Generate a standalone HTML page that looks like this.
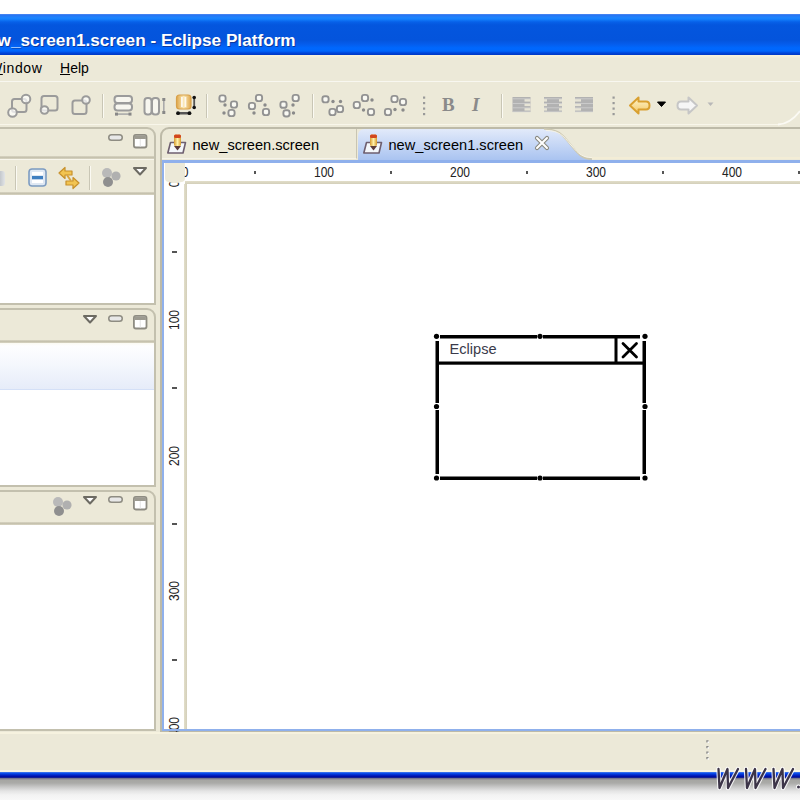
<!DOCTYPE html>
<html><head><meta charset="utf-8">
<style>
*{margin:0;padding:0;box-sizing:border-box}
html,body{width:800px;height:800px;overflow:hidden;background:#fff;font-family:"Liberation Sans",sans-serif}
.a{position:absolute}
#title{left:0;top:14px;width:800px;height:41px;background:linear-gradient(#5a90f0 0px,#2a74f2 1px,#1a86ff 4px,#127cfa 5.5px,#0760e8 8px,#0456de 11px,#0454dc 26px,#055ceb 30px,#0068fe 34px,#0066fc 37px,#0046da 39px,#0038c4 41px)}
#title span{position:absolute;top:15.5px;color:#fff;font-weight:bold;font-size:17.2px;line-height:20px;white-space:nowrap;text-shadow:1px 1px 0 #0a3aa0}
#menu{left:0;top:55px;width:800px;height:27px;background:linear-gradient(#f7f2dc 0px,#f2eedc 2px,#ece9d8 3px);border-bottom:1px solid #f8f7f0}
#menu span{position:absolute;top:5px;font-size:14px;line-height:17px;color:#000}
#tb{left:0;top:82px;width:800px;height:45px;background:#ece9d8}
#main{left:0;top:127px;width:800px;height:605px;background:#ece9d8}
#status{left:0;top:732px;width:800px;height:40px;background:#ece9d8}
#bottom{left:0;top:772px;width:800px;height:6px;background:linear-gradient(#4a80ee 0px,#0a4ae8 1.5px,#0028c8 3px,#0010a8 4.5px,#202a88 6px)}
#shadow{left:0;top:778px;width:800px;height:22px;background:linear-gradient(#6a6a88 0px,#a6a6a2 2px,#aaaaa8 5px,#c8c8c8 9px,#e4e4e4 13px,#f3f3f3 17px,#f8f8f8 22px)}
.panel{position:absolute;left:-10px;width:166px;border:2px solid #c3c0ae;border-top-right-radius:9px;background:#ece9d8}
.hl{position:absolute;left:0;right:0;height:3px;background:linear-gradient(#d9d5c3,#c6c2ae 50%,#d9d5c3)}
.sep{position:absolute;width:2px;border-left:1px solid #c9c6b5;border-right:1px solid #fbfaf3}
.pc{position:absolute;left:0;right:0;background:#fff}
#editor{position:absolute;left:160px;top:127px;width:650px;height:605px;border:2px solid #bdbaa8;border-top-left-radius:9px;background:#ece9d8}
.rh{position:absolute;top:164.5px;transform:translateX(-50%) scaleX(0.86);white-space:nowrap}
.rv{position:absolute;left:174px;transform:translate(-50%,-50%) rotate(-90deg) scaleX(0.86) translateY(0px);white-space:nowrap}
.th{position:absolute;top:170.5px;width:2px;height:3.5px;background:#555}
.tv{position:absolute;left:171.5px;width:5px;height:2px;background:#555}
.tabtxt{position:absolute;font-size:14px;line-height:17px;color:#000;white-space:nowrap}
</style></head><body>
<div id="title" class="a"><span style="left:-22.5px">new_screen1.screen - Eclipse Platform</span></div>
<div id="menu" class="a"><span style="left:-11px;letter-spacing:.6px"><u>W</u>indow</span><span style="left:60px"><u>H</u>elp</span></div>
<div id="tb" class="a"></div>
<div class="a" style="left:0;top:123.5px;width:781px;height:1.5px;background:#f8f6ea"></div>
<svg class="a" style="left:770px;top:105px" width="30" height="22"><path d="M8 19.5 Q20 19 30 6" fill="none" stroke="#fbfaf4" stroke-width="1.8"/></svg>
<div class="sep" style="left:102px;top:94px;height:24px"></div><div class="sep" style="left:206px;top:94px;height:24px"></div><div class="sep" style="left:312px;top:94px;height:24px"></div><div class="sep" style="left:501px;top:94px;height:24px"></div>
<svg class="a" style="left:0;top:0" width="800" height="130" viewBox="0 0 800 130"><rect x="12" y="99" width="14.5" height="13" rx="2.5" fill="none" stroke="#9b9b9b" stroke-width="2"/><circle cx="26" cy="99" r="4.3" fill="#fff" fill-opacity=".7" stroke="#9b9b9b" stroke-width="2"/><circle cx="12.5" cy="112.5" r="4.3" fill="#fff" fill-opacity=".7" stroke="#9b9b9b" stroke-width="2"/><rect x="41.5" y="96" width="16" height="14.5" rx="2.5" fill="none" stroke="#9b9b9b" stroke-width="2"/><circle cx="44.5" cy="110" r="3.8" fill="#fff" fill-opacity=".7" stroke="#9b9b9b" stroke-width="2"/><rect x="72.5" y="100.5" width="14" height="13.5" rx="2.5" fill="none" stroke="#9b9b9b" stroke-width="2"/><circle cx="86" cy="100" r="3.8" fill="#fff" fill-opacity=".7" stroke="#9b9b9b" stroke-width="2"/><rect x="114.5" y="96" width="17.5" height="7" rx="3" fill="#fff" fill-opacity=".6" stroke="#9b9b9b" stroke-width="2"/><rect x="114.5" y="103.5" width="17.5" height="7" rx="3" fill="#fff" fill-opacity=".6" stroke="#9b9b9b" stroke-width="2"/><rect x="116" y="113.3" width="14" height="1.6" fill="#aaa"/><rect x="115" y="112.6" width="3" height="3" fill="#888"/><rect x="128.5" y="112.6" width="3" height="3" fill="#888"/><rect x="144.5" y="98" width="7" height="16.5" rx="3" fill="#fff" fill-opacity=".6" stroke="#9b9b9b" stroke-width="2"/><rect x="152" y="98" width="7" height="16.5" rx="3" fill="#fff" fill-opacity=".6" stroke="#9b9b9b" stroke-width="2"/><rect x="163" y="99" width="1.6" height="14" fill="#aaa"/><rect x="162.3" y="98" width="3" height="3" fill="#888"/><rect x="162.3" y="111" width="3" height="3" fill="#888"/><defs><linearGradient id="og" x1="0" y1="0" x2="1" y2="0"><stop offset="0" stop-color="#dfa64a"/><stop offset=".5" stop-color="#fbe9b8"/><stop offset="1" stop-color="#dfa64a"/></linearGradient></defs><rect x="176.5" y="95" width="14.5" height="14" rx="3" fill="url(#og)" stroke="#d8a14a" stroke-width="1.2"/><rect x="181" y="97" width="1.8" height="10" fill="#fff" opacity=".8"/><rect x="184.5" y="97" width="1.8" height="10" fill="#fff" opacity=".8"/><rect x="178" y="112" width="12" height="2.5" fill="#555"/><circle cx="178" cy="113.2" r="1.9" fill="#111"/><circle cx="189.5" cy="113.2" r="1.9" fill="#111"/><rect x="193.3" y="97" width="1.8" height="11" fill="#555"/><circle cx="194.2" cy="97.5" r="1.8" fill="#111"/><circle cx="194.2" cy="107.5" r="1.8" fill="#111"/><rect x="219.4" y="95.4" width="6.2" height="6.2" rx="2.4" fill="#fff" fill-opacity=".7" stroke="#929292" stroke-width="1.9"/><rect x="230.9" y="101.4" width="6.2" height="6.2" rx="2.4" fill="#fff" fill-opacity=".7" stroke="#929292" stroke-width="1.9"/><rect x="228.4" y="109.9" width="6.2" height="6.2" rx="2.4" fill="#fff" fill-opacity=".7" stroke="#929292" stroke-width="1.9"/><circle cx="225" cy="105" r="1.7" fill="#8a8a8a"/><circle cx="224" cy="113" r="1.7" fill="#8a8a8a"/><rect x="255.9" y="94.9" width="6.2" height="6.2" rx="2.4" fill="#fff" fill-opacity=".7" stroke="#929292" stroke-width="1.9"/><rect x="248.9" y="102.9" width="6.2" height="6.2" rx="2.4" fill="#fff" fill-opacity=".7" stroke="#929292" stroke-width="1.9"/><rect x="262.9" y="108.9" width="6.2" height="6.2" rx="2.4" fill="#fff" fill-opacity=".7" stroke="#929292" stroke-width="1.9"/><circle cx="265" cy="105" r="1.7" fill="#8a8a8a"/><circle cx="254" cy="113" r="1.7" fill="#8a8a8a"/><rect x="292.6" y="94.9" width="6.2" height="6.2" rx="2.4" fill="#fff" fill-opacity=".7" stroke="#929292" stroke-width="1.9"/><rect x="280.4" y="101.6" width="6.2" height="6.2" rx="2.4" fill="#fff" fill-opacity=".7" stroke="#929292" stroke-width="1.9"/><rect x="283.4" y="110.3" width="6.2" height="6.2" rx="2.4" fill="#fff" fill-opacity=".7" stroke="#929292" stroke-width="1.9"/><circle cx="293" cy="105" r="1.7" fill="#8a8a8a"/><circle cx="293.5" cy="113" r="1.7" fill="#8a8a8a"/><rect x="322.4" y="96.2" width="6.2" height="6.2" rx="2.4" fill="#fff" fill-opacity=".7" stroke="#929292" stroke-width="1.9"/><circle cx="333" cy="101.5" r="1.7" fill="#8a8a8a"/><circle cx="340.5" cy="101.5" r="1.7" fill="#8a8a8a"/><rect x="329.4" y="108.9" width="6.2" height="6.2" rx="2.4" fill="#fff" fill-opacity=".7" stroke="#929292" stroke-width="1.9"/><rect x="336.9" y="105.9" width="6.2" height="6.2" rx="2.4" fill="#fff" fill-opacity=".7" stroke="#929292" stroke-width="1.9"/><rect x="353.7" y="101.9" width="6.2" height="6.2" rx="2.4" fill="#fff" fill-opacity=".7" stroke="#929292" stroke-width="1.9"/><rect x="361.9" y="94.9" width="6.2" height="6.2" rx="2.4" fill="#fff" fill-opacity=".7" stroke="#929292" stroke-width="1.9"/><circle cx="372" cy="100" r="1.7" fill="#8a8a8a"/><circle cx="363.5" cy="110" r="1.7" fill="#8a8a8a"/><rect x="367.9" y="108.9" width="6.2" height="6.2" rx="2.4" fill="#fff" fill-opacity=".7" stroke="#929292" stroke-width="1.9"/><rect x="391.4" y="95.9" width="6.2" height="6.2" rx="2.4" fill="#fff" fill-opacity=".7" stroke="#929292" stroke-width="1.9"/><rect x="399.9" y="98.9" width="6.2" height="6.2" rx="2.4" fill="#fff" fill-opacity=".7" stroke="#929292" stroke-width="1.9"/><rect x="384.9" y="108.9" width="6.2" height="6.2" rx="2.4" fill="#fff" fill-opacity=".7" stroke="#929292" stroke-width="1.9"/><circle cx="395" cy="109.5" r="1.7" fill="#8a8a8a"/><circle cx="403" cy="110" r="1.7" fill="#8a8a8a"/><rect x="423" y="96.5" width="2.2" height="2.2" fill="#999"/><rect x="423" y="102" width="2.2" height="2.2" fill="#999"/><rect x="423" y="107.5" width="2.2" height="2.2" fill="#999"/><rect x="423" y="113" width="2.2" height="2.2" fill="#999"/><rect x="612.5" y="96.5" width="2.2" height="2.2" fill="#999"/><rect x="612.5" y="102" width="2.2" height="2.2" fill="#999"/><rect x="612.5" y="107.5" width="2.2" height="2.2" fill="#999"/><rect x="612.5" y="113" width="2.2" height="2.2" fill="#999"/><text x="442" y="111" font-family="Liberation Serif" font-weight="bold" font-size="19" fill="#8a8a8a">B</text><text x="472" y="111" font-family="Liberation Serif" font-style="italic" font-weight="bold" font-size="19" fill="#8a8a8a">I</text><rect x="512.5" y="97" width="18" height="15" fill="#b2b2b2"/><rect x="524.5" y="99.1" width="6" height="2.5" fill="#ece9d8" opacity=".9"/><rect x="524.5" y="103.6" width="6" height="2.5" fill="#ece9d8" opacity=".9"/><rect x="524.5" y="108.1" width="6" height="2.5" fill="#ece9d8" opacity=".9"/><rect x="512.5" y="98.5" width="18" height="0.7" fill="#d4d4d4"/><rect x="512.5" y="103" width="18" height="0.7" fill="#d4d4d4"/><rect x="512.5" y="107.5" width="18" height="0.7" fill="#d4d4d4"/><rect x="512.5" y="111.5" width="18" height="0.7" fill="#d4d4d4"/><rect x="544" y="97" width="18" height="15" fill="#b2b2b2"/><rect x="544" y="99.1" width="3" height="2.5" fill="#ece9d8" opacity=".9"/><rect x="559" y="99.1" width="3" height="2.5" fill="#ece9d8" opacity=".9"/><rect x="544" y="103.6" width="3" height="2.5" fill="#ece9d8" opacity=".9"/><rect x="559" y="103.6" width="3" height="2.5" fill="#ece9d8" opacity=".9"/><rect x="544" y="108.1" width="3" height="2.5" fill="#ece9d8" opacity=".9"/><rect x="559" y="108.1" width="3" height="2.5" fill="#ece9d8" opacity=".9"/><rect x="544" y="98.5" width="18" height="0.7" fill="#d4d4d4"/><rect x="544" y="103" width="18" height="0.7" fill="#d4d4d4"/><rect x="544" y="107.5" width="18" height="0.7" fill="#d4d4d4"/><rect x="544" y="111.5" width="18" height="0.7" fill="#d4d4d4"/><rect x="575" y="97" width="18" height="15" fill="#b2b2b2"/><rect x="575" y="99.1" width="6" height="2.5" fill="#ece9d8" opacity=".9"/><rect x="575" y="103.6" width="6" height="2.5" fill="#ece9d8" opacity=".9"/><rect x="575" y="108.1" width="6" height="2.5" fill="#ece9d8" opacity=".9"/><rect x="575" y="98.5" width="18" height="0.7" fill="#d4d4d4"/><rect x="575" y="103" width="18" height="0.7" fill="#d4d4d4"/><rect x="575" y="107.5" width="18" height="0.7" fill="#d4d4d4"/><rect x="575" y="111.5" width="18" height="0.7" fill="#d4d4d4"/><defs><linearGradient id="ag" x1="0" y1="0" x2="0" y2="1"><stop offset="0" stop-color="#fff6cf"/><stop offset="1" stop-color="#f3c763"/></linearGradient></defs><path d="M630 105.5 L638.5 97.5 L638.5 101.5 L646 101.5 Q649.5 101.5 649.5 105.5 Q649.5 109.5 646 109.5 L638.5 109.5 L638.5 113.5 Z" fill="url(#ag)" stroke="#d9a030" stroke-width="2" stroke-linejoin="round"/><path d="M657.5 102 L665.5 102 L661.5 106.5 Z" fill="#000" stroke="#000" stroke-width="1" stroke-linejoin="round"/><path d="M697 105.5 L688.5 97.5 L688.5 101.5 L681 101.5 Q677.5 101.5 677.5 105.5 Q677.5 109.5 681 109.5 L688.5 109.5 L688.5 113.5 Z" fill="#f6f6f6" stroke="#c6c6c6" stroke-width="2" stroke-linejoin="round"/><path d="M707.5 102.5 L713.5 102.5 L710.5 106 Z" fill="#b8b8b8"/></svg>

<div id="main" class="a"></div>

<!-- left panels -->
<svg width="0" height="0" style="position:absolute">
 <defs>
  <g id="minb"><rect x="0.75" y="0.75" width="13.5" height="5.5" rx="2.75" fill="#e8e8e8" stroke="#8e8c82" stroke-width="1.5"/></g>
  <g id="maxb"><rect x="0.9" y="0.9" width="12.6" height="12.6" rx="2" fill="#fff" stroke="#8e8c82" stroke-width="1.8"/><rect x="1.5" y="1.5" width="11.4" height="3.5" fill="#9c9a90"/><rect x="6.8" y="5" width="0.8" height="8" fill="#ddd"/></g>
  <g id="tri"><path d="M1 1 L13 1 L7 7.5 Z" fill="#fff" stroke="#6d6b63" stroke-width="2" stroke-linejoin="round"/></g>
  <g id="penicon">
  <path d="M3.5 8.5 L18.5 8.5 L16 19 L0.8 19 Z" fill="#f4f7fb" stroke="#6e5f70" stroke-width="1.6" stroke-linejoin="round"/>
  <defs><linearGradient id="pg" x1="0" y1="0" x2="1" y2="0"><stop offset="0" stop-color="#d69a2e"/><stop offset=".5" stop-color="#fff0a8"/><stop offset="1" stop-color="#d69a2e"/></linearGradient></defs>
  <rect x="7" y="0.5" width="7" height="12" rx="2" fill="url(#pg)"/>
  <rect x="7" y="0.5" width="7" height="3.5" rx="1.5" fill="#d2461e"/>
  <path d="M7 12 L14 12 L10.5 16.5 Z" fill="#5a3a3a"/>
</g>
  <g id="balls"><circle cx="5" cy="5" r="5" fill="#b9b9b9"/><circle cx="14" cy="8" r="4.6" fill="#b0b0b0"/><circle cx="6" cy="14" r="5" fill="#8f8f8f"/></g>
 </defs>
</svg>
<div class="panel" style="top:127px;height:178px">
  <div class="hl" style="top:27px"></div>
  <div class="a" style="left:0;right:0;top:30px;height:1px;background:#f8f6ec"></div>
  <div class="hl" style="top:62.5px"></div>
  <div class="pc" style="top:65.5px;bottom:0"></div>
</div>
<svg class="a" style="left:108px;top:133.5px" width="15" height="7"><use href="#minb"/></svg>
<svg class="a" style="left:133px;top:134px" width="15" height="15"><use href="#maxb"/></svg>
<div class="a" style="left:0;top:171px;width:5px;height:15px;background:linear-gradient(90deg,#c4c8cc,#e2e4e6);border-radius:0 3px 3px 0"></div>
<div class="sep" style="left:15px;top:166px;height:24px"></div>
<svg class="a" style="left:28px;top:168px" width="20" height="20" viewBox="0 0 20 20">
  <rect x="1" y="1" width="17" height="17" rx="3" fill="#dfe8f3" stroke="#8aa6c8" stroke-width="1.6"/>
  <rect x="1" y="1" width="17" height="17" rx="3" fill="none" stroke="#6f8fb8" stroke-width="0.8" opacity=".6"/>
  <rect x="4" y="8" width="11" height="3.2" fill="#3f7fc0"/>
  <rect x="4" y="12" width="11" height="3" fill="#fff"/>
  <rect x="4" y="4" width="11" height="3" fill="#fff"/>
</svg>
<svg class="a" style="left:57px;top:166px" width="24" height="24" viewBox="0 0 24 24">
  <path d="M2 7 L8 1.5 L8 5 L15 5 L15 9 L8 9 L8 12.5 Z" fill="#f2c451" stroke="#c7902a" stroke-width="1.2" stroke-linejoin="round"/>
  <path d="M22 17 L16 22.5 L16 19 L9 19 L9 15 L16 15 L16 11.5 Z" fill="#f2c451" stroke="#c7902a" stroke-width="1.2" stroke-linejoin="round"/>
  <path d="M10 9 L14 15" stroke="#d9a540" stroke-width="2"/>
</svg>
<div class="sep" style="left:89px;top:166px;height:24px"></div>
<svg class="a" style="left:102px;top:168px" width="20" height="20"><use href="#balls"/></svg>
<svg class="a" style="left:133px;top:167px" width="15" height="9"><use href="#tri"/></svg>

<div class="panel" style="top:308px;height:179px">
  <div class="hl" style="top:29.5px"></div>
  <div class="pc" style="top:32.5px;bottom:0"></div>
  <div class="pc" style="top:32.5px;height:47.5px;background:linear-gradient(#fbfaf2 0px,#fefeff 3px,#f4f7fd 22px,#e6ecf9 46px);border-bottom:1.5px solid #d4e0f7"></div>
</div>
<svg class="a" style="left:83px;top:315px" width="15" height="9"><use href="#tri"/></svg>
<svg class="a" style="left:108px;top:315px" width="15" height="7"><use href="#minb"/></svg>
<svg class="a" style="left:133px;top:315px" width="15" height="15"><use href="#maxb"/></svg>

<div class="panel" style="top:490px;height:241px">
  <div class="hl" style="top:29.5px"></div>
  <div class="pc" style="top:32.5px;bottom:0"></div>
</div>
<svg class="a" style="left:53px;top:497px" width="20" height="20"><use href="#balls"/></svg>
<svg class="a" style="left:83px;top:496px" width="15" height="9"><use href="#tri"/></svg>
<svg class="a" style="left:108px;top:496px" width="15" height="7"><use href="#minb"/></svg>
<svg class="a" style="left:133px;top:496px" width="15" height="15"><use href="#maxb"/></svg>

<!-- editor -->
<div id="editor">
</div>
<!-- inactive tab -->
<div class="a" style="left:162px;top:129px;width:195px;height:30px;border-right:1px solid #c9c5b2;border-bottom:1px solid #f6f4ea"></div>
<div class="tabtxt" style="left:192.5px;top:137px;font-size:14.6px">new_screen.screen</div>
<!-- active tab -->
<svg class="a" style="left:356px;top:128px" width="250" height="34" viewBox="0 0 250 34">
  <defs><linearGradient id="tg" x1="0" y1="0" x2="0" y2="1"><stop offset="0" stop-color="#e2eafa"/><stop offset="1" stop-color="#a6c1f0"/></linearGradient></defs>
  <path d="M0 34 L0 32 L2 32 L2 8 Q2 1 9 1 L188 1 C202 1 206 6 214 16 C222 26 226 31 236 31 L236 34 Z" fill="url(#tg)"/>
  <path d="M188 1 C202 1 206 6 214 16 C222 26 226 31 236 31" fill="none" stroke="#cdc8b0" stroke-width="1.6"/><path d="M190 2.5 C203 2.5 207 7.5 215 17 C223 26.5 227 29.5 236 29.5 L250 29.5" fill="none" stroke="#f7f4e6" stroke-width="1"/>
</svg>
<div class="tabtxt" style="left:388.5px;top:137px;font-size:14.6px">new_screen1.screen</div>
<svg class="a" style="left:166.5px;top:134px" width="20" height="20"><use href="#penicon"/></svg>
<svg class="a" style="left:363px;top:134px" width="20" height="20"><use href="#penicon"/></svg>
<svg class="a" style="left:534px;top:135px" width="16" height="16" viewBox="0 0 16 16"><path d="M3 3 L13 13 M13 3 L3 13" stroke="#8a8a80" stroke-width="4.2" stroke-linecap="round"/><path d="M3 3 L13 13 M13 3 L3 13" stroke="#fff" stroke-width="2" stroke-linecap="round"/></svg>
<div class="a" style="left:592px;top:156.5px;width:210px;height:2.5px;background:#f3edd6"></div>
<!-- blue editor border -->
<div class="a" style="left:162px;top:159.5px;width:640px;height:571.5px;border:2.5px solid #8fb0ec;border-top-width:3px;border-right:none;background:#fff"></div>
<!-- rulers -->
<div class="a" style="left:165px;top:163px;width:20px;height:19px;background:#ece9d8;border-radius:0 0 4px 4px"></div>
<div class="a" style="left:185px;top:181px;width:620px;height:3px;background:linear-gradient(#e2dec9,#d3cfba)"></div>
<div class="a" style="left:183.5px;top:184px;width:3px;height:545px;background:linear-gradient(90deg,#e2dec9,#d3cfba)"></div>
<div class="a" style="left:0;top:0;font-size:14px;line-height:14px;color:#222">
  <span class="rh" style="left:184.5px">0</span>
  <span class="rh" style="left:323.5px">100</span>
  <span class="rh" style="left:459.5px">200</span>
  <span class="rh" style="left:595.5px">300</span>
  <span class="rh" style="left:731.5px">400</span>
  <i class="th" style="left:254px"></i><i class="th" style="left:390px"></i><i class="th" style="left:526px"></i><i class="th" style="left:662px"></i><i class="th" style="left:798px"></i>
  <span class="rv" style="top:183.5px">0</span>
  <span class="rv" style="top:320px">100</span>
  <span class="rv" style="top:456px">200</span>
  <span class="rv" style="top:591px">300</span>
  <span class="rv" style="top:727px">400</span>
  <i class="tv" style="top:251px"></i><i class="tv" style="top:387px"></i><i class="tv" style="top:523px"></i><i class="tv" style="top:659px"></i>
</div>
<div class="a" style="left:164.5px;top:162.5px;width:20px;height:20px;background:#ece9d8;border-radius:0 0 8px 8px"></div>
<div class="a" style="left:162px;top:728.5px;width:640px;height:2.5px;background:#8fb0ec"></div>
<!-- shell widget -->
<svg class="a" style="left:425px;top:325px" width="235" height="165" viewBox="425 325 235 165">
  <g fill="#000">
    <rect x="440" y="335" width="97" height="3.5"/>
    <rect x="543" y="335" width="97" height="3.5"/>
    <rect x="440" y="476.5" width="97" height="3.5"/>
    <rect x="543" y="476.5" width="97" height="3.5"/>
    <rect x="435.5" y="341" width="3.5" height="62"/>
    <rect x="435.5" y="410" width="3.5" height="64"/>
    <rect x="642.5" y="341" width="3.5" height="62"/>
    <rect x="642.5" y="410" width="3.5" height="64"/>
    <rect x="439" y="361.5" width="204" height="3.2"/>
    <rect x="614.5" y="338" width="3" height="24"/>
    <circle cx="436.5" cy="336.3" r="2.6"/>
    <circle cx="540" cy="336.3" r="2.6"/>
    <circle cx="645" cy="336.3" r="2.6"/>
    <circle cx="436.5" cy="406.5" r="2.6"/>
    <circle cx="645" cy="406.5" r="2.6"/>
    <circle cx="436.5" cy="478" r="2.6"/>
    <circle cx="540" cy="478" r="2.6"/>
    <circle cx="645" cy="478" r="2.6"/>
  </g>
  <path d="M623 343.5 L636.5 357 M636.5 343.5 L623 357" stroke="#000" stroke-width="2.8" stroke-linecap="round"/>
</svg>
<div class="a" style="left:449.5px;top:341px;font-size:14.6px;line-height:17px;color:#3a3a4a">Eclipse</div>

<div id="status" class="a"></div>
<div class="a" style="left:0;top:732px;width:800px;height:2px;background:#f6f2df"></div>
<div class="a" style="left:0;top:769.5px;width:800px;height:2.5px;background:#f7f4e4"></div>
<svg class="a" style="left:704px;top:738px" width="8" height="24"><rect x="2.3" y="2.25" width="2.2" height="2.2" fill="#888"/><rect x="3.5" y="3.45" width="1.5" height="1.5" fill="#fff"/><rect x="2.3" y="8" width="2.2" height="2.2" fill="#888"/><rect x="3.5" y="9.2" width="1.5" height="1.5" fill="#fff"/><rect x="2.3" y="13.5" width="2.2" height="2.2" fill="#888"/><rect x="3.5" y="14.7" width="1.5" height="1.5" fill="#fff"/><rect x="2.3" y="19" width="2.2" height="2.2" fill="#888"/><rect x="3.5" y="20.2" width="1.5" height="1.5" fill="#fff"/></svg>
<div id="bottom" class="a"></div>
<div id="shadow" class="a"></div>
<svg class="a" style="left:700px;top:760px" width="100" height="40" viewBox="700 760 100 40"><path d="M718.5 769 L719.5 788 L727.5 769 L728.0 788 L738.0 769 M746 769 L747 788 L755 769 L755.5 788 L765.5 769 M773.5 769 L774.5 788 L782.5 769 L783.0 788 L793.0 769 " fill="none" stroke="#fff" stroke-opacity=".85" stroke-width="4.5" stroke-linejoin="round" stroke-linecap="round"/><path d="M718.5 769 L719.5 788 L727.5 769 L728.0 788 L738.0 769 M746 769 L747 788 L755 769 L755.5 788 L765.5 769 M773.5 769 L774.5 788 L782.5 769 L783.0 788 L793.0 769 " fill="none" stroke="#3c3448" stroke-width="2.3" stroke-linejoin="round" stroke-linecap="round"/><circle cx="798.5" cy="787" r="2.4" fill="#fff"/><circle cx="798.5" cy="787" r="1.5" fill="#3c3448"/></svg>
</body></html>
